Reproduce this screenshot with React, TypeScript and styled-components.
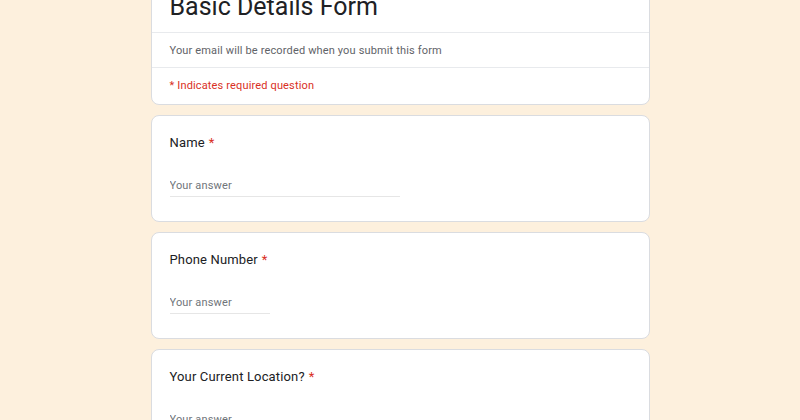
import styled, { createGlobalStyle } from "styled-components";

const GlobalStyle = createGlobalStyle`
  html, body {
    margin: 0;
    padding: 0;
    background: #fdf0dd;
    font-family: Roboto, "Liberation Sans", Arial, sans-serif;
    overflow: hidden;
  }
`;

const Page = styled.div`
  display: flex;
  flex-direction: column;
  align-items: center;
  gap: 10px;
  min-height: 420px;
`;

const Card = styled.div<{ $header?: boolean }>`
  box-sizing: border-box;
  width: 499px;
  background: #fff;
  border: 1px solid #dadce0;
  border-radius: 8px;
  margin-top: ${(p) => (p.$header ? "-34px" : "0")};
`;

const Title = styled.div`
  padding: 24px 18px 9px;
  font-size: 25px;
  line-height: 32px;
  color: #202124;
`;

const Section = styled.div<{ $h: number; $red?: boolean }>`
  display: flex;
  align-items: center;
  box-sizing: border-box;
  height: ${(p) => p.$h}px;
  padding: 0 18px ${(p) => (p.$red ? "2px" : "0")};
  border-top: 1px solid #e8eaed;
  font-size: 11px;
  letter-spacing: 0.15px;
  color: ${(p) => (p.$red ? "#d93025" : "#5f6368")};
`;

const Question = styled.div`
  padding: 17px 18px 24px;
  display: flex;
  flex-direction: column;
  gap: 19px;
`;

const Label = styled.div`
  font-size: 13px;
  line-height: 20px;
  color: #202124;
  letter-spacing: 0.15px;
`;

const Required = styled.span`
  color: #d93025;
  margin-left: 4px;
`;

const Answer = styled.input<{ $w: number }>`
  box-sizing: border-box;
  width: ${(p) => p.$w}px;
  height: 25px;
  padding: 2px 0 0;
  border: none;
  border-bottom: 1px solid #e6e6e6;
  outline: none;
  background: transparent;
  font-family: inherit;
  font-size: 11px;
  letter-spacing: 0.15px;
  color: #202124;

  &::placeholder {
    color: #70757a;
  }
`;

const questions = [
  { label: "Name", width: 230 },
  { label: "Phone Number", width: 100 },
  { label: "Your Current Location?", width: 230 },
];

export default function App() {
  return (
    <>
      <GlobalStyle />
      <Page>
        <Card $header>
          <Title>Basic Details Form</Title>
          <Section $h={35}>Your email will be recorded when you submit this form</Section>
          <Section $h={37} $red>
            * Indicates required question
          </Section>
        </Card>
        {questions.map((q) => (
          <Card key={q.label}>
            <Question>
              <Label>
                {q.label}
                <Required>*</Required>
              </Label>
              <Answer $w={q.width} placeholder="Your answer" />
            </Question>
          </Card>
        ))}
      </Page>
    </>
  );
}
